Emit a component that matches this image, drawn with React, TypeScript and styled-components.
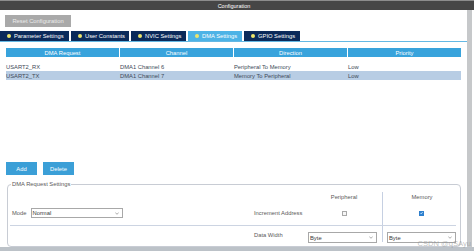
import React from "react";
import styled, { createGlobalStyle } from "styled-components";

const Global = createGlobalStyle`
  html, body { margin: 0; padding: 0; background: #fff; }
  body {
    width: 474px; height: 251px; overflow: hidden;
    font-family: "Liberation Sans", Arial, sans-serif;
  }
  * { box-sizing: border-box; }
`;

const Page = styled.div`
  position: relative;
  width: 474px;
  height: 251px;
  display: grid;
  grid-template-rows: 10px 237px 4px;
`;

const Header = styled.div`
  border-top: 1px solid #8c8c8c;
  background: #464646;
  color: #fff;
  font-size: 5.5px;
  display: flex;
  align-items: center;
  justify-content: center;
  padding-right: 6px;
`;

const Body = styled.div`
  display: flex;
`;

const Main = styled.div`
  width: 467px;
  display: flex;
  flex-direction: column;
  padding-top: 5px;
`;

const ScrollStrip = styled.div`
  width: 5px;
  background: #c6c8ca;
`;

const BottomBar = styled.div`
  background: #bcc2c8;
`;

const ResetButton = styled.button`
  margin: 0 0 0 5px;
  width: 66px;
  height: 12px;
  border: none;
  padding: 0;
  background: #a9a9a9;
  color: #ececec;
  font-family: inherit;
  font-size: 5.8px;
  display: flex;
  align-items: center;
  justify-content: center;
`;

const TabBar = styled.div`
  margin-top: 4px;
  display: flex;
  gap: 2px;
  height: 11px;
  border-bottom: 1px solid #64b8e4;
`;

const Tab = styled.div<{ $w: number; $active?: boolean }>`
  width: ${(p) => p.$w}px;
  height: 10px;
  background: ${(p) => (p.$active ? "#4db3e6" : "#0b2a5a")};
  color: #fff;
  font-size: 5.8px;
  display: flex;
  align-items: center;
  padding-left: 7px;
  gap: 3px;
  white-space: nowrap;
`;

const Dot = styled.span`
  width: 4px;
  height: 4px;
  border-radius: 50%;
  background: #ece56c;
  flex: none;
`;

const TableGrid = styled.div`
  margin-left: 6px;
  display: grid;
  grid-template-columns: repeat(4, 113px);
  column-gap: 1px;
`;

const HeadCell = styled.div`
  height: 9px;
  margin-top: 6px;
  background: #38a3dc;
  color: #fff;
  font-size: 5.8px;
  display: flex;
  align-items: center;
  justify-content: center;
`;

const Rows = styled.div`
  margin-top: 5px;
  margin-left: 6px;
  width: 455px;
  display: flex;
  flex-direction: column;
`;

const Row = styled.div<{ $selected?: boolean }>`
  height: 9px;
  display: grid;
  grid-template-columns: 114px 114px 114px 113px;
  align-items: center;
  background: ${(p) => (p.$selected ? "#b8cde4" : "transparent")};
  color: #404a58;
  font-size: 5.8px;
`;

const ButtonRow = styled.div`
  margin-top: 82px;
  margin-left: 6px;
  display: flex;
  gap: 6px;
`;

const BlueButton = styled.button`
  width: 31px;
  height: 13px;
  border: none;
  padding: 0;
  background: #3b9fd7;
  color: #fff;
  font-family: inherit;
  font-size: 5.8px;
`;

const Settings = styled.fieldset`
  margin: 6px 0 0 7px;
  width: 454px;
  height: 66px;
  border: 1px solid #c8ccd4;
  border-radius: 4px;
  padding: 0 0 0 2px;
  display: grid;
  grid-template-columns: 240px 56px 76px 74px;
  grid-template-rows: 17px 16px auto 17px;
`;

const Legend = styled.legend`
  font-size: 5.8px;
  line-height: 7px;
  color: #5a5a5a;
  padding: 0 1px;
  margin-left: 1px;
`;

const Cell = styled.div<{ $col: string; $row: string; $justify?: string; $align?: string; $pl?: number }>`
  grid-column: ${(p) => p.$col};
  grid-row: ${(p) => p.$row};
  display: flex;
  align-items: center;
  justify-content: ${(p) => p.$justify || "flex-start"};
  align-self: ${(p) => p.$align || "stretch"};
  padding-left: ${(p) => p.$pl || 0}px;
  font-size: 5.8px;
  color: #5a5a5a;
  gap: 4px;
  white-space: nowrap;
`;

const VLine = styled.div`
  grid-column: 4;
  grid-row: 1 / 5;
  margin: 4px 0 1px;
  border-left: 1px solid #c6d0e2;
`;

const Divider = styled.div`
  grid-column: 1 / -1;
  grid-row: 3;
  margin-top: 4px;
  height: 1px;
  background: #ccd4e2;
`;

const SelectBox = styled.div<{ $w: number; $h: number; $ml?: number }>`
  width: ${(p) => p.$w}px;
  height: ${(p) => p.$h}px;
  margin-left: ${(p) => p.$ml || 0}px;
  border: 1px solid #a8a8a8;
  background: #fff;
  color: #3a3a3a;
  font-size: 5.8px;
  display: flex;
  align-items: center;
  justify-content: space-between;
  padding: 0 3px 0 1px;
`;

const Check = styled.div<{ $checked?: boolean }>`
  width: 5px;
  height: 5px;
  border: 1px solid ${(p) => (p.$checked ? "#2f7fcc" : "#a8a8a8")};
  background: ${(p) => (p.$checked ? "#2f84d4" : "#f6f6f6")};
  display: flex;
  align-items: center;
  justify-content: center;
`;

const Watermark = styled.div`
  position: absolute;
  right: 3px;
  bottom: 3px;
  font-size: 7.6px;
  color: rgba(140, 140, 140, 0.55);
  white-space: nowrap;
`;

const Chevron = () => (
  <svg width="4" height="3" viewBox="0 0 4 3">
    <path d="M0.3 0.5 L2 2.3 L3.7 0.5" fill="none" stroke="#8a8a8a" strokeWidth="0.7" />
  </svg>
);

const Tick = () => (
  <svg width="4" height="4" viewBox="0 0 4 4">
    <path d="M0.5 2 L1.6 3.1 L3.5 0.8" fill="none" stroke="#fff" strokeWidth="0.9" />
  </svg>
);

const Select = ({ value, w, h, ml }: { value: string; w: number; h: number; ml?: number }) => (
  <SelectBox $w={w} $h={h} $ml={ml}>
    <span>{value}</span>
    <Chevron />
  </SelectBox>
);

const tabs = [
  { label: "Parameter Settings", w: 69 },
  { label: "User Constants", w: 58 },
  { label: "NVIC Settings", w: 55 },
  { label: "DMA Settings", w: 54, active: true },
  { label: "GPIO Settings", w: 56 },
];

const rows = [
  ["USART2_RX", "DMA1 Channel 6", "Peripheral To Memory", "Low"],
  ["USART2_TX", "DMA1 Channel 7", "Memory To Peripheral", "Low"],
];

export default function App() {
  return (
    <>
      <Global />
      <Page>
        <Header>Configuration</Header>
        <Body>
          <Main>
            <ResetButton>Reset Configuration</ResetButton>
            <TabBar>
              {tabs.map((t) => (
                <Tab key={t.label} $w={t.w} $active={t.active}>
                  <Dot />
                  {t.label}
                </Tab>
              ))}
            </TabBar>
            <TableGrid>
              {["DMA Request", "Channel", "Direction", "Priority"].map((h) => (
                <HeadCell key={h}>{h}</HeadCell>
              ))}
            </TableGrid>
            <Rows>
              {rows.map((r, i) => (
                <Row key={r[0]} $selected={i === 1}>
                  {r.map((c) => (
                    <span key={c}>{c}</span>
                  ))}
                </Row>
              ))}
            </Rows>
            <ButtonRow>
              <BlueButton>Add</BlueButton>
              <BlueButton>Delete</BlueButton>
            </ButtonRow>
            <Settings>
              <Legend>DMA Request Settings</Legend>
              <VLine />
              <Cell $col="3" $row="1" $justify="center">Peripheral</Cell>
              <Cell $col="4" $row="1" $justify="center" $pl={6}>Memory</Cell>
              <Cell $col="1" $row="2" $pl={2}>
                Mode
                <Select value="Normal" w={92} h={10} />
              </Cell>
              <Cell $col="2" $row="2" $pl={4}>Increment Address</Cell>
              <Cell $col="3" $row="2" $justify="center" $pl={1}>
                <Check />
              </Cell>
              <Cell $col="4" $row="2" $justify="center" $pl={4}>
                <Check $checked>
                  <Tick />
                </Check>
              </Cell>
              <Divider />
              <Cell $col="2" $row="4" $pl={4}>Data Width</Cell>
              <Cell $col="3" $row="4" $align="end">
                <Select value="Byte" w={69} h={11} ml={2} />
              </Cell>
              <Cell $col="4" $row="4" $align="end">
                <Select value="Byte" w={69} h={11} ml={5} />
              </Cell>
            </Settings>
          </Main>
          <ScrollStrip />
        </Body>
        <BottomBar />
        <Watermark>CSDN @qSAyu</Watermark>
      </Page>
    </>
  );
}
